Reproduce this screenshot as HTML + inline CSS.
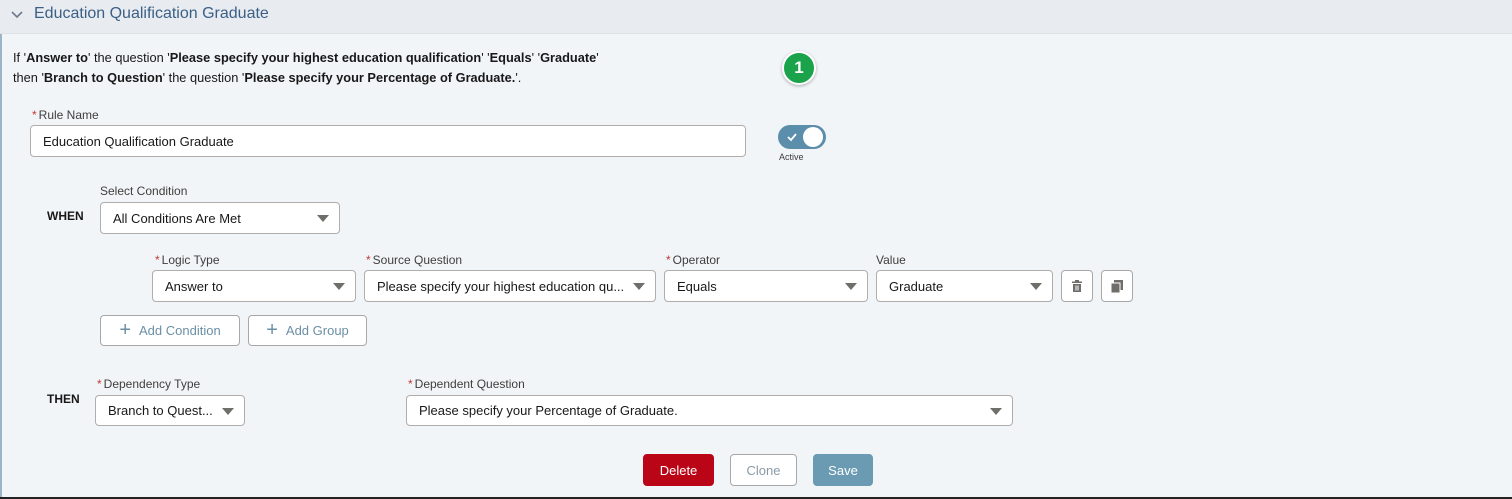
<!DOCTYPE html>
<html><head><meta charset="utf-8"><style>
*{box-sizing:border-box;margin:0;padding:0}
body{width:1512px;height:499px;background:#f2f5f8;font-family:"Liberation Sans",sans-serif;font-size:12.5px;color:#181818;position:relative;overflow:hidden}
.a{position:absolute}
.hdr{left:0;top:0;width:1512px;height:34px;background:#e8ecf0;border-bottom:1px solid #dde1e6}
.lb{font-size:12px;color:#3e3e3c;white-space:nowrap}
.lb i{color:#c23934;font-style:normal;margin-right:2px}
.in{background:#fff;border:1px solid #b0adab;border-radius:4px;padding-left:12px;display:flex;align-items:center;font-size:13px;white-space:nowrap;overflow:hidden}
.dd::after{content:"";position:absolute;right:10px;top:50%;margin-top:-3px;border-left:6px solid transparent;border-right:6px solid transparent;border-top:7px solid #706e6b}
.bt{border:1px solid #a8a8a8;border-radius:4px;background:#fff;color:#6b8fa5;font-size:13px;display:flex;align-items:center;justify-content:center}
.b{font-weight:bold}
</style></head><body>
<div class="a" style="left:0;top:0;width:2px;height:499px;background:#9db4c6"></div>
<div class="a hdr"></div>
<svg class="a" style="left:10px;top:9px" width="14" height="12"><path d="M2 3 L7 8 L12 3" stroke="#6d7b8a" stroke-width="1.6" fill="none"/></svg>
<div class="a" style="left:34px;top:5px;font-size:16px;color:#3b5f85">Education Qualification Graduate</div>
<div class="a" style="left:13px;top:48px;font-size:12.8px;line-height:20px">If '<span class="b">Answer to</span>' the question '<span class="b">Please specify your highest education qualification</span>' '<span class="b">Equals</span>' '<span class="b">Graduate</span>'<br>then '<span class="b">Branch to Question</span>' the question '<span class="b">Please specify your Percentage of Graduate.</span>'.</div>
<div class="a" style="left:782px;top:51px;width:34px;height:34px;border-radius:50%;background:#1aa34a;border:2px solid #fff;box-shadow:0 1px 3px rgba(0,0,0,.3);color:#fff;font-weight:bold;font-size:17px;display:flex;align-items:center;justify-content:center">1</div>
<div class="a lb" style="left:32px;top:108px"><i>*</i>Rule Name</div>
<div class="a in" style="left:30px;top:125px;width:716px;height:32px">Education Qualification Graduate</div>
<div class="a" style="left:778px;top:125px;width:48px;height:24px;border-radius:12px;background:#5a8eab"><div class="a" style="left:25px;top:2px;width:20px;height:20px;border-radius:50%;background:#fff"></div><svg class="a" style="left:8px;top:6px" width="12" height="12"><path d="M2 6 L5 9 L10 3" stroke="#fff" stroke-width="1.8" fill="none"/></svg></div>
<div class="a" style="left:779px;top:152px;font-size:9px;color:#3e3e3c">Active</div>
<div class="a lb" style="left:100px;top:184px">Select Condition</div>
<div class="a b" style="left:47px;top:209px;font-size:12px">WHEN</div>
<div class="a in dd" style="left:100px;top:202px;width:240px;height:32px">All Conditions Are Met</div>
<div class="a lb" style="left:155px;top:253px"><i>*</i>Logic Type</div>
<div class="a lb" style="left:366px;top:253px"><i>*</i>Source Question</div>
<div class="a lb" style="left:666px;top:253px"><i>*</i>Operator</div>
<div class="a lb" style="left:876px;top:253px">Value</div>
<div class="a in dd" style="left:152px;top:270px;width:204px;height:32px">Answer to</div>
<div class="a in dd" style="left:364px;top:270px;width:292px;height:32px;padding-right:30px">Please specify your highest education qu...</div>
<div class="a in dd" style="left:664px;top:270px;width:204px;height:32px">Equals</div>
<div class="a in dd" style="left:876px;top:270px;width:177px;height:32px">Graduate</div>
<div class="a bt" style="left:1061px;top:270px;width:32px;height:32px"><svg width="14" height="14"><rect x="3" y="5" width="8" height="8" fill="#706e6b"/><rect x="2" y="2.5" width="10" height="1.5" fill="#706e6b"/><rect x="5" y="1" width="4" height="1.5" fill="#706e6b"/><rect x="5.5" y="6.5" width="1" height="5" fill="#fff"/><rect x="7.5" y="6.5" width="1" height="5" fill="#fff"/></svg></div>
<div class="a bt" style="left:1101px;top:270px;width:32px;height:32px"><svg width="14" height="14"><rect x="4" y="1" width="9" height="10" fill="#706e6b"/><rect x="1" y="4" width="9" height="10" fill="#706e6b" stroke="#fff" stroke-width="1"/></svg></div>
<div class="a bt" style="left:100px;top:315px;width:140px;height:31px"><span style="font-size:20px;margin-right:8px;font-weight:300">+</span>Add Condition</div>
<div class="a bt" style="left:248px;top:315px;width:119px;height:31px"><span style="font-size:20px;margin-right:8px;font-weight:300">+</span>Add Group</div>
<div class="a lb" style="left:97px;top:377px"><i>*</i>Dependency Type</div>
<div class="a lb" style="left:408px;top:377px"><i>*</i>Dependent Question</div>
<div class="a b" style="left:47px;top:392px;font-size:12px">THEN</div>
<div class="a in dd" style="left:95px;top:395px;width:150px;height:31px">Branch to Quest...</div>
<div class="a in dd" style="left:406px;top:395px;width:607px;height:31px">Please specify your Percentage of Graduate.</div>
<div class="a bt" style="left:643px;top:454px;width:71px;height:32px;background:#ba0517;border-color:#ba0517;color:#fff">Delete</div>
<div class="a bt" style="left:730px;top:454px;width:67px;height:32px;color:#8a9aa5">Clone</div>
<div class="a bt" style="left:813px;top:454px;width:60px;height:32px;background:#6b9bb3;border-color:#6b9bb3;color:#fff">Save</div>
<div class="a" style="left:0;top:497px;width:1512px;height:2px;background:#222"></div>
</body></html>
